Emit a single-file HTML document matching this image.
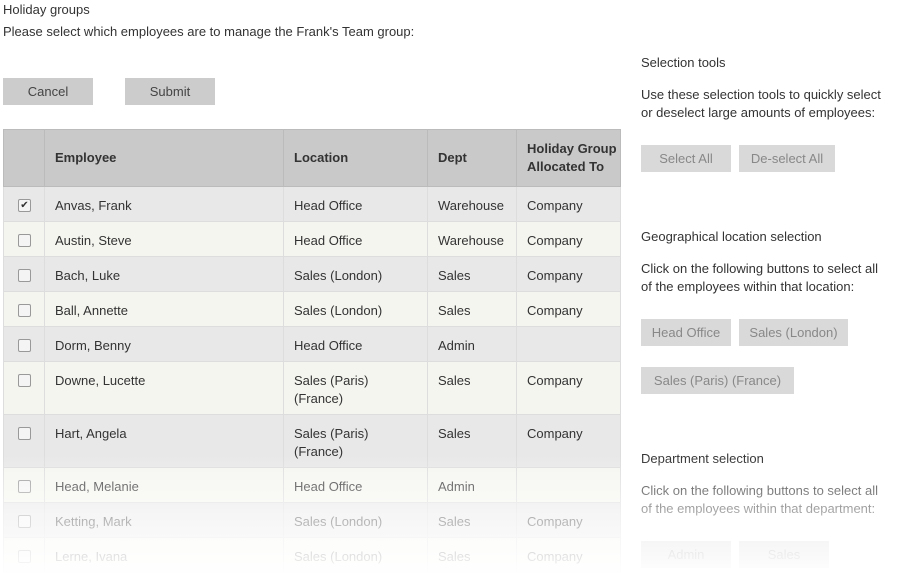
<!DOCTYPE html><html><head><style>
body{margin:0;width:906px;height:574px;overflow:hidden;background:#fff;font-family:"Liberation Sans",sans-serif;font-size:13px;color:#333;position:relative}
.a{position:absolute;white-space:nowrap;line-height:18px}
.b{position:absolute;background:#d9d9d9;color:#888;text-align:center;line-height:27px;height:27px;font-size:13px}
.c{position:absolute;background:#ccc;color:#444;text-align:center;line-height:27px;height:27px}
table{position:absolute;left:3px;top:129px;width:617px;border-collapse:collapse;table-layout:fixed}
td,th{border:1px solid #ddd;padding:0 10px;text-align:left;vertical-align:top;line-height:18px}
th{background:#c9c9c9;height:56px;vertical-align:middle;border-color:#bbb;color:#333}
td{padding-top:10px;padding-bottom:6px}
tr.o td{background:#e8e8e8}tr.e td{background:#f5f5f0}
.cb{display:block;width:11px;height:11px;border:1px solid #999;border-radius:2px;background:#f4f4f4;margin:2px 0 0 4px;font-size:10px;line-height:11px;text-align:center}
#fade{position:absolute;left:0;top:455px;width:906px;height:119px;background:linear-gradient(rgba(255,255,255,0),rgba(255,255,255,0.6) 50%,rgba(255,255,255,0.97))}
</style></head><body>
<div class="a" style="left:3px;top:1px">Holiday groups</div>
<div class="a" style="left:3px;top:23px">Please select which employees are to manage the Frank's Team group:</div>
<div class="c" style="left:3px;top:78px;width:90px">Cancel</div>
<div class="c" style="left:125px;top:78px;width:90px">Submit</div>
<table>
<colgroup><col style="width:41px"><col style="width:239px"><col style="width:144px"><col style="width:89px"><col style="width:104px"></colgroup>
<tr><th></th><th>Employee</th><th>Location</th><th>Dept</th><th style="padding:0 0 0 10px;white-space:nowrap">Holiday Group<br>Allocated To</th></tr>
<tr class="o"><td><span class="cb">✔</span></td><td>Anvas, Frank</td><td>Head Office</td><td>Warehouse</td><td>Company</td></tr>
<tr class="e"><td><span class="cb"></span></td><td>Austin, Steve</td><td>Head Office</td><td>Warehouse</td><td>Company</td></tr>
<tr class="o"><td><span class="cb"></span></td><td>Bach, Luke</td><td>Sales (London)</td><td>Sales</td><td>Company</td></tr>
<tr class="e"><td><span class="cb"></span></td><td>Ball, Annette</td><td>Sales (London)</td><td>Sales</td><td>Company</td></tr>
<tr class="o"><td><span class="cb"></span></td><td>Dorm, Benny</td><td>Head Office</td><td>Admin</td><td></td></tr>
<tr class="e"><td><span class="cb"></span></td><td>Downe, Lucette</td><td>Sales (Paris)<br>(France)</td><td>Sales</td><td>Company</td></tr>
<tr class="o"><td><span class="cb"></span></td><td>Hart, Angela</td><td>Sales (Paris)<br>(France)</td><td>Sales</td><td>Company</td></tr>
<tr class="e"><td><span class="cb"></span></td><td>Head, Melanie</td><td>Head Office</td><td>Admin</td><td></td></tr>
<tr class="o"><td><span class="cb"></span></td><td>Ketting, Mark</td><td>Sales (London)</td><td>Sales</td><td>Company</td></tr>
<tr class="e"><td><span class="cb"></span></td><td>Lerne, Ivana</td><td>Sales (London)</td><td>Sales</td><td>Company</td></tr>
</table>
<div class="a" style="left:641px;top:54px">Selection tools</div>
<div class="a" style="left:641px;top:86px">Use these selection tools to quickly select<br>or deselect large amounts of employees:</div>
<div class="b" style="left:641px;top:145px;width:90px">Select All</div>
<div class="b" style="left:739px;top:145px;width:96px">De-select All</div>
<div class="a" style="left:641px;top:228px">Geographical location selection</div>
<div class="a" style="left:641px;top:260px">Click on the following buttons to select all<br>of the employees within that location:</div>
<div class="b" style="left:641px;top:319px;width:90px">Head Office</div>
<div class="b" style="left:739px;top:319px;width:109px">Sales (London)</div>
<div class="b" style="left:641px;top:367px;width:153px">Sales (Paris) (France)</div>
<div class="a" style="left:641px;top:450px">Department selection</div>
<div class="a" style="left:641px;top:482px">Click on the following buttons to select all<br>of the employees within that department:</div>
<div class="b" style="left:641px;top:541px;width:90px">Admin</div>
<div class="b" style="left:739px;top:541px;width:90px">Sales</div>
<div id="fade"></div>
</body></html>
